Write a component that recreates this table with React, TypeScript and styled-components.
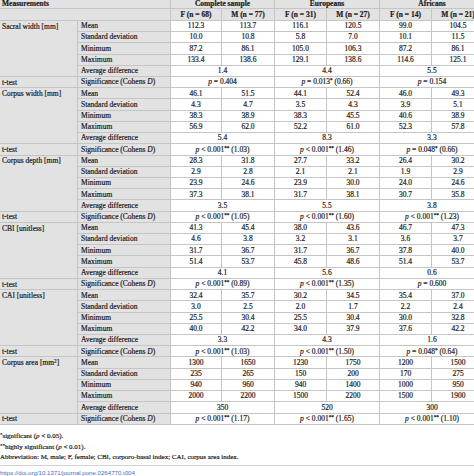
import React from "react";
import styled, { createGlobalStyle } from "styled-components";

/* ---------------- styled-components ---------------- */

const GlobalStyle = createGlobalStyle`
  html, body {
    margin: 0;
    padding: 0;
    background: #ffffff;
    overflow: hidden;
  }
  body {
    font-family: "Liberation Serif", "Times New Roman", serif;
    color: #1e1b1c;
  }
`;

const Page = styled.div`
  width: 474px;
  height: 476px;
  overflow: hidden;
`;

const Table = styled.table`
  border-collapse: collapse;
  table-layout: fixed;
  width: 486px;
  margin: -2.5px 0 0 -2px;
  font-size: 7.5px;
  line-height: 1;
  -webkit-text-stroke: 0.2px #1e1b1c;

  td,
  th {
    border: 1px solid #c5c5c5;
    padding: 0 3px;
    white-space: nowrap;
    overflow: hidden;
  }
`;

const HeadRow = styled.tr`
  height: 10.6px;
`;

const SubHeadRow = styled.tr`
  height: 11.8px;
`;

const Row = styled.tr`
  height: 11.22px;
`;

const HeadCell = styled.th<{ $align?: "left" | "center" }>`
  background: #e2e2e2;
  font-weight: bold;
  text-align: ${(p) => p.$align ?? "center"};
  vertical-align: middle;
`;

const LabelCell = styled.td`
  background: #e2e2e2;
  text-align: left;
  vertical-align: top;
  padding-top: 1.8px !important;
`;

const StatCell = styled.td`
  background: #e2e2e2;
  text-align: left;
  vertical-align: middle;
`;

const ValueCell = styled.td`
  background: #ffffff;
  text-align: center;
  vertical-align: middle;
`;

const I = styled.i`
  font-style: italic;
`;

const Sup = styled.sup`
  font-size: 0.7em;
  line-height: 0;
  vertical-align: 0.45em;
`;

const Notes = styled.div`
  display: flex;
  flex-direction: column;
  padding-top: 6px;
  font-size: 7px;
  line-height: 10.8px;
  -webkit-text-stroke: 0.2px #1e1b1c;
`;

const Note = styled.div`
  white-space: nowrap;
`;

const Divider = styled.div`
  height: 1px;
  margin-top: 1.5px;
  background: #d2d2d2;
`;

const DoiLink = styled.a`
  display: block;
  margin-top: 3px;
  font-family: "Liberation Sans", Arial, sans-serif;
  font-size: 6.1px;
  color: #3f6fc6;
  text-decoration: none;
`;

/* ---------------- data ---------------- */

type Group = {
  label: React.ReactNode;
  rows: string[][]; // Mean, SD, Min, Max: 6 values each
  diff: string[];
  sig: React.ReactNode[];
};

const sigText = (op: string, val: string, stars = "", d?: string) => (
  <>
    <I>p</I> {op} {val}
    {stars && <Sup>{stars}</Sup>}
    {d && ` (${d})`}
  </>
);

const groups: Group[] = [
  {
    label: "Sacral width [mm]",
    rows: [
      ["112.3", "113.7", "116.1", "120.5", "99.0", "104.5"],
      ["10.0", "10.8", "5.8", "7.0", "10.1", "11.5"],
      ["87.2", "86.1", "105.0", "106.3", "87.2", "86.1"],
      ["133.4", "138.6", "129.1", "138.6", "114.6", "125.1"],
    ],
    diff: ["1.4", "4.4", "5.5"],
    sig: [
      sigText("=", "0.404"),
      sigText("=", "0.013", "*", "0.66"),
      sigText("=", "0.154"),
    ],
  },
  {
    label: "Corpus width [mm]",
    rows: [
      ["46.1", "51.5", "44.1", "52.4", "46.0", "49.3"],
      ["4.3", "4.7", "3.5", "4.3", "3.9", "5.1"],
      ["38.3", "38.9", "38.3", "45.5", "40.6", "38.9"],
      ["56.9", "62.0", "52.2", "61.0", "52.3", "57.8"],
    ],
    diff: ["5.4", "8.3", "3.3"],
    sig: [
      sigText("<", "0.001", "**", "1.03"),
      sigText("<", "0.001", "**", "1.46"),
      sigText("=", "0.048", "*", "0.66"),
    ],
  },
  {
    label: "Corpus depth [mm]",
    rows: [
      ["28.3", "31.8", "27.7", "33.2", "26.4", "30.2"],
      ["2.9", "2.8", "2.1", "2.1", "1.9", "2.9"],
      ["23.9", "24.6", "23.9", "30.0", "24.0", "24.6"],
      ["37.3", "38.1", "31.7", "38.1", "30.7", "35.8"],
    ],
    diff: ["3.5", "5.5", "3.8"],
    sig: [
      sigText("<", "0.001", "**", "1.05"),
      sigText("<", "0.001", "**", "1.60"),
      sigText("<", "0.001", "**", "1.23"),
    ],
  },
  {
    label: "CBI [unitless]",
    rows: [
      ["41.3", "45.4", "38.0", "43.6", "46.7", "47.3"],
      ["4.6", "3.8", "3.2", "3.1", "3.6", "3.7"],
      ["31.7", "36.7", "31.7", "36.7", "37.8", "40.0"],
      ["51.4", "53.7", "45.8", "48.6", "51.4", "53.7"],
    ],
    diff: ["4.1", "5.6", "0.6"],
    sig: [
      sigText("<", "0.001", "**", "0.89"),
      sigText("<", "0.001", "**", "1.35"),
      sigText("=", "0.600"),
    ],
  },
  {
    label: "CAI [unitless]",
    rows: [
      ["32.4", "35.7", "30.2", "34.5", "35.4", "37.0"],
      ["3.0", "2.5", "2.0", "1.7", "2.2", "2.4"],
      ["25.5", "30.4", "25.5", "30.4", "30.0", "32.8"],
      ["40.0", "42.2", "34.0", "37.9", "37.6", "42.2"],
    ],
    diff: ["3.3", "4.3", "1.6"],
    sig: [
      sigText("<", "0.001", "**", "1.03"),
      sigText("<", "0.001", "**", "1.50"),
      sigText("=", "0.048", "*", "0.64"),
    ],
  },
  {
    label: (
      <>
        Corpus area [mm<Sup>2</Sup>]
      </>
    ),
    rows: [
      ["1300", "1650", "1230", "1750", "1200", "1500"],
      ["235", "265", "150", "200", "170", "275"],
      ["940", "960", "940", "1400", "1000", "950"],
      ["2000", "2200", "1500", "2200", "1500", "1900"],
    ],
    diff: ["350", "520", "300"],
    sig: [
      sigText("<", "0.001", "**", "1.17"),
      sigText("<", "0.001", "**", "1.65"),
      sigText("<", "0.001", "**", "1.10"),
    ],
  },
];

const statNames = ["Mean", "Standard deviation", "Minimum", "Maximum"];
const colWidths = [79, 93, 51, 53, 52, 53, 52, 53];

export default function App() {
  return (
    <>
      <GlobalStyle />
      <Page>
        <Table>
          <colgroup>
            {colWidths.map((w, i) => (
              <col key={i} style={{ width: w }} />
            ))}
          </colgroup>
          <thead>
            <HeadRow>
              <HeadCell colSpan={2} $align="left">
                Measurements
              </HeadCell>
              <HeadCell colSpan={2}>Complete sample</HeadCell>
              <HeadCell colSpan={2}>Europeans</HeadCell>
              <HeadCell colSpan={2}>Africans</HeadCell>
            </HeadRow>
            <SubHeadRow>
              <HeadCell colSpan={2} />
              <HeadCell>F (n = 68)</HeadCell>
              <HeadCell>M (n = 77)</HeadCell>
              <HeadCell>F (n = 31)</HeadCell>
              <HeadCell>M (n = 27)</HeadCell>
              <HeadCell>F (n = 14)</HeadCell>
              <HeadCell>M (n = 21)</HeadCell>
            </SubHeadRow>
          </thead>
          <tbody>
            {groups.map((g, gi) => (
              <React.Fragment key={gi}>
                {g.rows.map((vals, ri) => (
                  <Row key={ri}>
                    {ri === 0 && <LabelCell rowSpan={5}>{g.label}</LabelCell>}
                    <StatCell>{statNames[ri]}</StatCell>
                    {vals.map((v, vi) => (
                      <ValueCell key={vi}>{v}</ValueCell>
                    ))}
                  </Row>
                ))}
                <Row>
                  <StatCell>Average difference</StatCell>
                  {g.diff.map((v, vi) => (
                    <ValueCell key={vi} colSpan={2}>
                      {v}
                    </ValueCell>
                  ))}
                </Row>
                <Row>
                  <LabelCell>t-test</LabelCell>
                  <StatCell>
                    Significance (Cohens <I>D</I>)
                  </StatCell>
                  {g.sig.map((v, vi) => (
                    <ValueCell key={vi} colSpan={2}>
                      {v}
                    </ValueCell>
                  ))}
                </Row>
              </React.Fragment>
            ))}
          </tbody>
        </Table>

        <Notes>
          <Note>
            <Sup>*</Sup>significant (<I>p</I> &lt; 0.05).
          </Note>
          <Note>
            <Sup>**</Sup>highly significant (<I>p</I> &lt; 0.01).
          </Note>
          <Note>
            Abbreviation: M, male; F, female; CBI, corporo-basal index; CAI,
            corpus area index.
          </Note>
        </Notes>
        <Divider />
        <DoiLink href="#">https://doi.org/10.1371/journal.pone.0264770.t004</DoiLink>
      </Page>
    </>
  );
}
